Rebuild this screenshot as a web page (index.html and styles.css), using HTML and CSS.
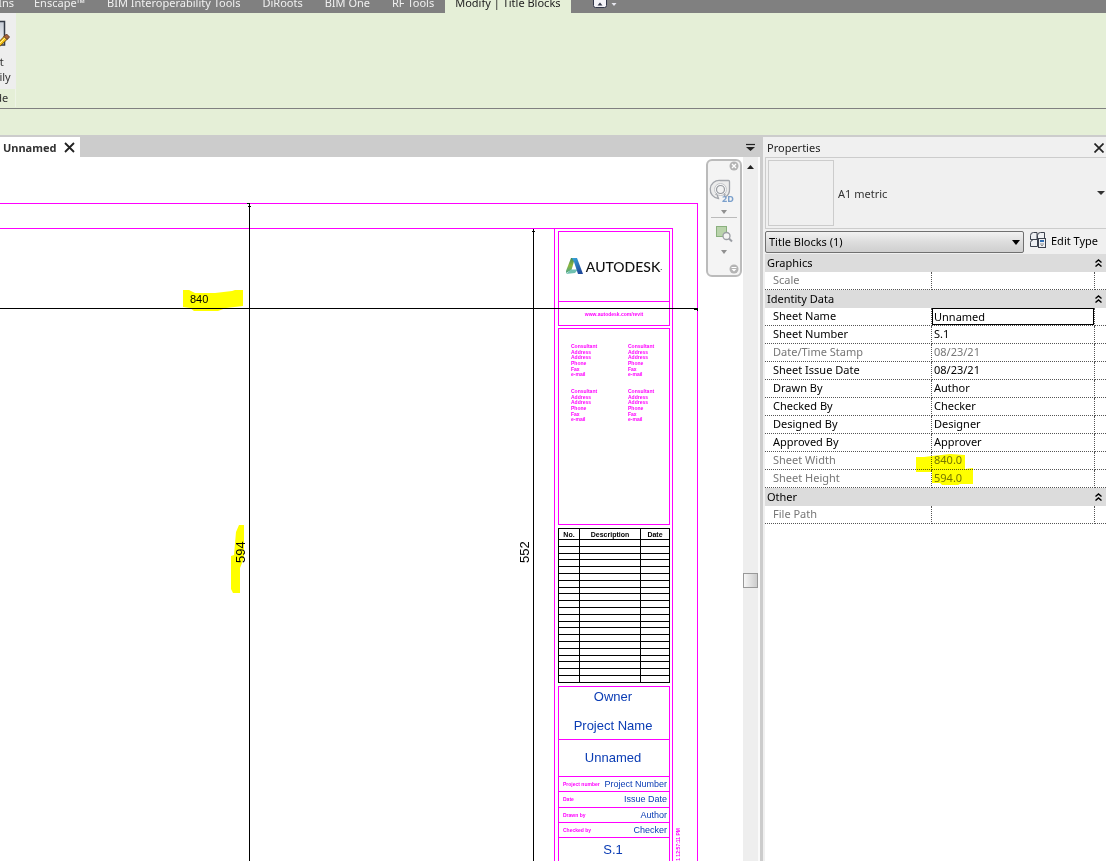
FILE: index.html
```html
<!DOCTYPE html>
<html lang="en">
<head>
<meta charset="utf-8">
<title>Unnamed - Title Blocks</title>
<link rel="stylesheet" href="styles.css">
</head>
<body>
<header class="ribbon">
  <nav class="tabs">
    <button class="tab tab-first">Add-Ins</button>
    <button class="tab">Enscape™</button>
    <button class="tab">BIM Interoperability Tools</button>
    <button class="tab">DiRoots</button>
    <button class="tab">BIM One</button>
    <button class="tab">RF Tools</button>
    <button class="tab active">Modify | Title Blocks</button>
    <button class="collapse" aria-label="Minimize ribbon">
      <svg width="26" height="13" viewBox="0 0 26 13"><rect x="1.500" y="-4" width="13" height="11.500" rx="2" fill="#f4f4f8" stroke="#34384a"/><path d="M5.500 5.500 8 2.500l2.500 3z" fill="#34384a"/><path d="M19.500 3h5L22 6z" fill="#e8e8f0"/></svg>
    </button>
  </nav>
  <div class="panels">
    <section class="panel">
      <button class="big-button">
        <svg width="32" height="32" viewBox="0 0 32 32"><defs><linearGradient id="pg" x2="0" y2="1"><stop offset="0" stop-color="#c6ccd6"/><stop offset="1" stop-color="#f3f5f8"/></linearGradient></defs><path d="M2 4.500H26.500V28H2z" fill="url(#pg)" stroke="#333a46" stroke-width="1.500"/><path d="M16 30 27 18.500l3 3L18 33z" fill="#f6c416" stroke="#6d4a12"/><path d="M26 19.500l2.500-2.500 3 3-2.500 2.500z" fill="#a8643c" stroke="#5c3a28"/><path d="M18 30 27 21" stroke="#fff0a0"/></svg>
        <span>Edit</span><span>Family</span>
      </button>
      <div class="panel-name">Mode</div>
    </section>
  </div>
  <div class="options"></div>
</header>
<main class="workspace">
  <section class="document">
    <div class="doc-tabs">
      <div class="doc-tab"><span>Unnamed</span>
        <button aria-label="Close view"><svg width="11" height="11" viewBox="0 0 11 11"><path d="M1 1l9 9M10 1l-9 9" stroke="#222" stroke-width="1.800"/></svg></button>
      </div>
      <button class="tab-menu" aria-label="List views"><svg width="9" height="8" viewBox="0 0 9 8"><path d="M0 1.500h9" stroke="#222" stroke-width="1.200"/><path d="M0 4h9L4.500 8z" fill="#222"/></svg></button>
    </div>
    <div class="view">
      <div class="canvas">
        <section class="title-block">
          <div class="frame brand">
            <div class="logo">
              <svg width="17" height="17" viewBox="0 0 17 17"><defs><linearGradient id="g1" x2="0" y2="1"><stop offset="0" stop-color="#3d8a5a"/><stop offset=".5" stop-color="#8db63c"/><stop offset="1" stop-color="#4aa58c"/></linearGradient><linearGradient id="g2" x2=".6" y2="1"><stop offset="0" stop-color="#37a6dc"/><stop offset="1" stop-color="#1f4a9c"/></linearGradient></defs><path d="M5 0h4L5.500 12 0 15v-2z" fill="url(#g1)"/><path d="M0 16 5 11.500h7L9 15z" fill="#6fc0b0"/><path d="M6 0h5l6 16h-5L8 4z" fill="url(#g2)"/></svg>
              <span>AUTODESK</span><small>.</small>
            </div>
            <div class="site">www.autodesk.com/revit</div>
          </div>
          <div class="frame consultants">
            <ul><li>Consultant</li><li>Address</li><li>Address</li><li>Phone</li><li>Fax</li><li>e-mail</li></ul>
            <ul><li>Consultant</li><li>Address</li><li>Address</li><li>Phone</li><li>Fax</li><li>e-mail</li></ul>
            <ul><li>Consultant</li><li>Address</li><li>Address</li><li>Phone</li><li>Fax</li><li>e-mail</li></ul>
            <ul><li>Consultant</li><li>Address</li><li>Address</li><li>Phone</li><li>Fax</li><li>e-mail</li></ul>
          </div>
          <table class="revisions">
            <thead><tr><th class="no">No.</th><th>Description</th><th class="date">Date</th></tr></thead>
            <tbody>
              <tr><td></td><td></td><td></td></tr><tr><td></td><td></td><td></td></tr><tr><td></td><td></td><td></td></tr>
              <tr><td></td><td></td><td></td></tr><tr><td></td><td></td><td></td></tr><tr><td></td><td></td><td></td></tr>
              <tr><td></td><td></td><td></td></tr><tr><td></td><td></td><td></td></tr><tr><td></td><td></td><td></td></tr>
              <tr><td></td><td></td><td></td></tr><tr><td></td><td></td><td></td></tr><tr><td></td><td></td><td></td></tr>
              <tr><td></td><td></td><td></td></tr><tr><td></td><td></td><td></td></tr><tr><td></td><td></td><td></td></tr>
              <tr><td></td><td></td><td></td></tr><tr><td></td><td></td><td></td></tr><tr><td></td><td></td><td></td></tr>
              <tr><td></td><td></td><td></td></tr><tr><td></td><td></td><td></td></tr><tr><td></td><td></td><td></td></tr>
            </tbody>
          </table>
          <div class="frame project">
            <div class="owner"><div>Owner</div><div>Project Name</div></div>
            <div class="sheet-name">Unnamed</div>
            <dl>
              <div><dt>Project number</dt><dd>Project Number</dd></div>
              <div><dt>Date</dt><dd>Issue Date</dd></div>
              <div><dt>Drawn by</dt><dd>Author</dd></div>
              <div><dt>Checked by</dt><dd>Checker</dd></div>
            </dl>
            <div class="sheet-number">S.1</div>
          </div>
        </section>
        <div class="stamp">8/23/21 12:57:11 PM</div>
        <svg class="lines" width="100%" height="100%">
          <g fill="#ff0">
            <path d="M183 133h6l6 3h20l17-2 3-1h8v16l-17 2-8 3h-24l-4-3-7-1z"/>
            <path d="M239 368h5v33l-4 10v25h-7l-2-4v-33l3-1 2-23z"/>
          </g>
          <g fill="none" stroke="#f0f" shape-rendering="crispEdges">
            <path d="M0 46.500H697.500V3000M0 71.500H555"/>
          </g>
          <g fill="none" stroke="#000" shape-rendering="crispEdges">
            <path d="M0 151.500H698M249.500 46V3000M533.500 72V3000"/>
            <path d="M247 46.500h3M248 49h3M532 74h3M694 152.500h4M697.500 151v3" />
          </g>
          <g class="dims">
            <text x="190" y="146" font-size="11">840</text>
            <text transform="translate(245 406) rotate(-90)" font-size="13">594</text>
            <text transform="translate(529 406) rotate(-90)" font-size="13">552</text>
          </g>
        </svg>
        <div class="navbar">
          <button class="corner" aria-label="Close"><svg width="10" height="10" viewBox="0 0 10 10"><circle cx="5" cy="5" r="4.500" fill="#b4b4b4"/><path d="M3 3l4 4M7 3 3 7" stroke="#fff" stroke-width="1.300"/></svg></button>
          <button class="wheel" aria-label="2D steering wheel"><svg width="26" height="26" viewBox="0 0 26 26"><path d="M11 1.500h8.500q1 0 1 1V10a9.500 9 0 0 1-4 8l-1.500-2.500h-7L9.500 19.500A9 9 0 0 1 11 1.500z" fill="#ececec" stroke="#a2a5ab" stroke-width="1.300"/><circle cx="11.500" cy="10.500" r="6" fill="#f8f8f8" stroke="#c3c5c9"/><circle cx="11.500" cy="10.500" r="4" fill="#f2f2f2" stroke="#96999f" stroke-width="1.200"/><path d="M8.500 13.500 6.500 16M14.500 13.500l2 2.500" stroke="#a2a5ab"/><text x="13" y="23" class="two-d">2D</text></svg></button>
          <button class="drop" aria-label="Wheel options"><svg width="6" height="4"><path d="M0 0h6L3 4z" fill="#909090"/></svg></button>
          <hr>
          <button class="zoom" aria-label="Zoom region"><svg width="18" height="18" viewBox="0 0 18 18"><rect x="1.500" y="1.500" width="10" height="10" fill="#b9d3ab" stroke="#8ab07e"/><circle cx="11.500" cy="11" r="3.500" fill="#f4f4f4" stroke="#9b9ea4" stroke-width="1.300"/><path d="M14 13.500l3 3" stroke="#9b9ea4" stroke-width="2"/></svg></button>
          <button class="drop drop-low" aria-label="Zoom options"><svg width="6" height="4"><path d="M0 0h6L3 4z" fill="#909090"/></svg></button>
          <button class="corner last" aria-label="Customize"><svg width="10" height="10" viewBox="0 0 10 10"><circle cx="5" cy="5" r="4.500" fill="#b4b4b4"/><path d="M2.500 3.500h5" stroke="#fff"/><path d="M2.500 5h5L5 7.500z" fill="#fff"/></svg></button>
        </div>
      </div>
      <div class="scrollbar">
        <button class="scroll-up" aria-label="Scroll up"><svg width="7" height="4"><path d="M0 4h7L3.500 0z" fill="#222"/></svg></button>
        <div class="thumb"></div>
      </div>
    </div>
  </section>
  <aside class="properties">
    <div class="prop-title"><span>Properties</span>
      <button aria-label="Close properties"><svg width="10" height="10" viewBox="0 0 10 10"><path d="M.5 .5l9 9M9.500 .5l-9 9" stroke="#222" stroke-width="1.700"/></svg></button>
    </div>
    <button class="type-selector"><span class="thumbnail"></span><span class="type-name">A1 metric</span><svg width="8" height="4"><path d="M0 0h8L4 4z" fill="#333"/></svg></button>
    <div class="filter">
      <div class="select-wrap">
        <select aria-label="Category"><option>Title Blocks (1)</option></select>
        <svg width="8" height="5"><path d="M0 0h8L4 5z" fill="#000"/></svg>
      </div>
      <button class="edit-type"><svg width="17" height="17" viewBox="0 0 17 17"><g fill="#eef0f3" stroke="#3c424e"><path d="M.5 3.500q0-3 3-3H7V7.500H.5zM7.500 3.500q0-3 3-3h4V7.500h-7zM.5 10.500q0-2 3-3H7.500v7H.5z"/><rect x="8.500" y="6.500" width="7" height="9"/></g><path d="M10 8h4v2h-4z" fill="#2f6fb5"/><path d="M10.500 12h1M12.500 12h1M11.500 13.500h1" stroke="#333"/></svg><span>Edit Type</span></button>
    </div>
    <table class="grid">
      <colgroup><col class="c-name"><col><col class="c-end"></colgroup>
      <tbody>
        <tr class="group"><th colspan="2">Graphics</th><td><button aria-label="Collapse Graphics"><svg width="7" height="8"><path d="M.5 3.500l3-2.500 3 2.500M.5 7.500l3-2.500 3 2.500" class="chev"/></svg></button></td></tr>
        <tr class="ro"><th>Scale</th><td></td><td></td></tr>
        <tr class="group"><th colspan="2">Identity Data</th><td><button aria-label="Collapse Identity Data"><svg width="7" height="8"><path d="M.5 3.500l3-2.500 3 2.500M.5 7.500l3-2.500 3 2.500" class="chev"/></svg></button></td></tr>
        <tr><th><label for="p1">Sheet Name</label></th><td class="current"><input id="p1" value="Unnamed"></td><td></td></tr>
        <tr><th><label for="p2">Sheet Number</label></th><td><input id="p2" value="S.1"></td><td></td></tr>
        <tr class="ro"><th>Date/Time Stamp</th><td>08/23/21</td><td></td></tr>
        <tr><th><label for="p3">Sheet Issue Date</label></th><td><input id="p3" value="08/23/21"></td><td></td></tr>
        <tr><th><label for="p4">Drawn By</label></th><td><input id="p4" value="Author"></td><td></td></tr>
        <tr><th><label for="p5">Checked By</label></th><td><input id="p5" value="Checker"></td><td></td></tr>
        <tr><th><label for="p6">Designed By</label></th><td><input id="p6" value="Designer"></td><td></td></tr>
        <tr><th><label for="p7">Approved By</label></th><td><input id="p7" value="Approver"></td><td></td></tr>
        <tr class="ro"><th>Sheet Width</th><td class="marked">840.0<svg class="marker" width="58" height="32"><path d="M0 3h8l8-1 18-2 15 1v14l8-1v16H44l-2 1H26l-2-2h-8V18H0z" fill="#ff0"/></svg></td><td></td></tr>
        <tr class="ro"><th>Sheet Height</th><td>594.0</td><td></td></tr>
        <tr class="group"><th colspan="2">Other</th><td><button aria-label="Collapse Other"><svg width="7" height="8"><path d="M.5 3.500l3-2.500 3 2.500M.5 7.500l3-2.500 3 2.500" class="chev"/></svg></button></td></tr>
        <tr class="ro"><th>File Path</th><td></td><td></td></tr>
      </tbody>
    </table>
  </aside>
</main>
</body>
</html>
```

FILE: styles.css
```css
* { box-sizing: border-box; }
body {
  margin: 0;
  height: 100vh;
  display: flex;
  flex-direction: column;
  overflow: hidden;
  font: 11px/18px "Noto Sans", "Open Sans", sans-serif;
  color: #000;
  background: #fff;
}
button, input, select { font: inherit; color: inherit; }
button { border: 0; padding: 0; background: none; display: block; }
svg { display: block; }

/* Ribbon */
.ribbon { flex: none; background: #e5efd7; }
.tabs { display: flex; height: 13px; background: #808080; overflow: hidden; align-items: flex-end; }
.tab { flex: none; height: 20px; line-height: 20px; padding: 0 11px; color: #f0f0f0; white-space: nowrap; }
.tab-first { width: 23px; padding: 0 9px 0 0; display: flex; justify-content: flex-end; }
.tab.active { background: #e5efd7; color: #222; padding: 0 10px; }
.collapse { margin-left: 21px; height: 13px; }
.panels { height: 96px; border-bottom: 1px solid #808080; }
.panel { width: 16px; display: flex; flex-direction: column; align-items: flex-end; overflow: hidden; color: #333; }
.big-button { width: 44px; height: 76px; background: #eee; display: flex; flex-direction: column; align-items: center; padding-top: 4px; line-height: 15px; }
.big-button svg { margin-bottom: 5px; flex: none; }
.panel-name { width: 44px; line-height: 18px; text-align: center; border-right: 1px solid #eef4e6; }
.options { height: 26px; }

/* Document side */
.workspace { flex: 1; min-height: 0; display: flex; }
.document { flex: 1; min-width: 0; display: flex; flex-direction: column; border-right: 3px solid #ccc; }
.doc-tabs { flex: none; height: 22px; padding-top: 2px; background: #ccc; display: flex; justify-content: space-between; align-items: center; }
.doc-tab { width: 80px; height: 20px; padding: 1px 5px 0 3px; background: #fff; display: flex; justify-content: space-between; align-items: center; font-weight: bold; color: #333; }
.tab-menu { margin-right: 5px; }
.view { flex: 1; min-height: 0; display: flex; }
.canvas { flex: 1; min-width: 0; position: relative; overflow: hidden; }
.scrollbar { width: 17px; background: #eee; border-right: 2px solid #fafafa; display: flex; flex-direction: column; align-items: center; }
.scroll-up { width: 15px; height: 20px; display: grid; place-items: center; }
.thumb { width: 15px; height: 15px; margin-top: 396px; border: 1px solid #999; background: linear-gradient(90deg, #f6f6f6, #ccc); }

/* Drawing */
.lines { position: absolute; inset: 0; z-index: 2; pointer-events: none; }
.dims { font-family: "Liberation Sans", Arial, sans-serif; }
.title-block {
  position: absolute; z-index: 1; left: 554px; top: 71px; bottom: 0; width: 119px;
  padding: 2px 2px 0 3px;
  border: 1px solid #f0f; border-bottom: 0;
  display: flex; flex-direction: column; gap: 3px;
  font: bold 5px/6px "Liberation Sans", Arial, sans-serif; color: #f0f;
}
.frame { flex: none; border: 1px solid #f0f; }
.brand { margin-bottom: -1px; }
.logo { height: 70px; border-bottom: 1px solid #f0f; display: flex; justify-content: center; align-items: center; gap: 3px; font: 500 14px/18px Lato, sans-serif; color: #111; }
.logo small { font-size: 8px; margin-left: -3px; }
.site { height: 23px; line-height: 24px; text-align: center; }
.consultants { height: 197px; padding: 15px 12px; display: grid; grid-template-columns: 1fr 1fr; column-gap: 28px; row-gap: 11px; align-content: start; }
.consultants ul { margin: 0; padding: 0; list-style: none; height: 34px; display: grid; grid-auto-rows: 1fr; line-height: 5px; }
.revisions { flex: none; width: 100%; border-collapse: separate; border-spacing: 0; table-layout: fixed; border: solid #000; border-width: 1px 0 0 1px; color: #000; font-size: 7px; line-height: 7px; }
.revisions th, .revisions td { padding: 0; border: solid #000; border-width: 0 1px 1px 0; height: 7px; }
.revisions th { height: 11px; }
.revisions .no { width: 21px; }
.revisions .date { width: 29px; }
.revisions tr:nth-child(5n+3) td { height: 6px; }
.project { flex: 1 0 auto; color: #0a3cb4; font-size: 13px; font-weight: normal; line-height: 20px; text-align: center; }
.owner { height: 53px; display: grid; align-content: start; row-gap: 9px; border-bottom: 1px solid #f0f; }
.sheet-name { height: 37px; line-height: 36px; border-bottom: 1px solid #f0f; }
.owner, .sheet-name, .sheet-number { padding-right: 2px; }
.project dl { margin: 0; height: 61px; display: grid; grid-auto-rows: 1fr; }
.project dl div { display: flex; justify-content: space-between; align-items: center; padding: 0 2px 0 4px; border-bottom: 1px solid #f0f; line-height: 12px; }
.project dt { font-size: 5px; font-weight: bold; color: #f0f; }
.project dd { margin: 0; font-size: 9px; }
.sheet-number { line-height: 23px; }
.stamp { position: absolute; left: 675px; top: 671px; writing-mode: vertical-rl; transform: rotate(180deg); font: bold 5px/6px "Liberation Sans", Arial, sans-serif; color: #f0f; white-space: nowrap; }

/* Navigation bar floating over the drawing */
.navbar { position: absolute; z-index: 3; top: 2px; right: 1px; width: 36px; height: 118px; border: 2px solid #bbb; border-radius: 6px; background: #f4f4f4; display: flex; flex-direction: column; align-items: center; }
.corner { align-self: flex-end; margin-right: 1px; }
.wheel { margin: 8px 4px 0 0; }
.two-d { font: bold 9px "Noto Sans", sans-serif; fill: #7ba0cc; }
.drop { margin-top: 5px; }
.drop-low { margin-top: 7px; }
.navbar hr { width: 26px; margin: 3px 0 7px; border: 0; border-top: 1px solid #bbb; }
.corner.last { margin-top: auto; margin-bottom: 1px; }

/* Properties palette */
.properties { flex: 0 0 343px; padding-left: 2px; border-top: 2px solid #ccc; background: linear-gradient(#f0f0f0, #f0f0f0) top / 100% 117px no-repeat, #fff; box-shadow: inset 2px 0 #f0f0f0; }
.prop-title { height: 20px; padding: 1px 2px 0; display: flex; justify-content: space-between; align-items: center; color: #222; }
.type-selector { width: 100%; height: 72px; padding: 0 1px 0 2px; border: 1px solid #ccc; border-right: 0; display: flex; align-items: center; color: #333; }
.thumbnail { width: 66px; height: 66px; border: 1px solid #ccc; }
.type-name { flex: 1; margin-left: 4px; padding-top: 2px; text-align: left; }
.filter { height: 25px; display: flex; align-items: center; }
.select-wrap { flex: 1; position: relative; }
.select-wrap select { display: block; width: 100%; height: 22px; padding: 0 3px; appearance: none; border: 1px solid #707070; border-radius: 2px; background: linear-gradient(#f2f2f2, #ddd 50%, #cfcfcf); }
.select-wrap svg { position: absolute; right: 4px; top: 9px; pointer-events: none; }
.edit-type { width: 82px; padding: 0 0 2px 6px; display: flex; align-items: center; gap: 4px; white-space: nowrap; }
.grid { width: 100%; table-layout: fixed; border-collapse: separate; border-spacing: 0; background: #fff; }
.c-name { width: 167px; }
.c-end { width: 11px; }
.grid th, .grid td { height: 18px; padding: 0 0 1px 2px; line-height: 16px; text-align: left; font-weight: normal; white-space: nowrap; border-bottom: 1px dotted #555; border-right: 1px dotted #555; }
.grid th { padding-left: 8px; }
.grid td:last-child { padding: 0; border-right: 0; }
.grid input { display: block; width: 100%; height: 16px; padding: 0; border: 0; background: none; outline: 0; }
.grid .current { padding: 0; }
.grid .current input { height: 17px; padding: 0 0 1px 1px; border: 1px solid #000; }
.grid .group th, .grid .group td { background: #dcdcdc; border: 0; padding: 0 0 0 2px; line-height: 18px; }
.grid .group td { padding: 0; }
.ro { color: #777; }
.chev { fill: none; stroke: #000; stroke-width: 1.4; }
.marked { position: relative; }
.marker { position: absolute; left: -16px; top: 2px; mix-blend-mode: multiply; pointer-events: none; }
```
